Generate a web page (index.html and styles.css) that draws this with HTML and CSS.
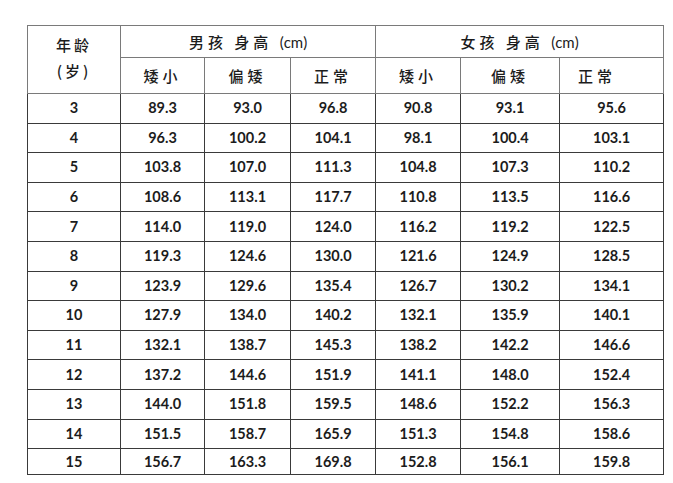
FILE: index.html
```html
<!DOCTYPE html>
<html lang="zh">
<head>
<meta charset="utf-8">
<link rel="stylesheet" href="styles.css">
</head>
<body>
<table class="chart">
  <colgroup>
    <col class="c-age"><col class="c1"><col class="c2"><col class="c3"><col class="c4"><col class="c5"><col class="c6">
  </colgroup>
  <thead>
    <tr class="h1">
      <th rowspan="2" class="zh age">年龄<br>(岁)</th>
      <th colspan="3" class="zh grp">男孩 身高 <span class="lat">(cm)</span></th>
      <th colspan="3" class="zh grp">女孩 身高 <span class="lat">(cm)</span></th>
    </tr>
    <tr class="h2">
      <th class="zh">矮小</th><th class="zh">偏矮</th><th class="zh">正常</th>
      <th class="zh">矮小</th><th class="zh">偏矮</th><th class="zh left">正常</th>
    </tr>
  </thead>
  <tbody>
    <tr><td>3</td><td>89.3</td><td>93.0</td><td>96.8</td><td>90.8</td><td>93.1</td><td>95.6</td></tr>
    <tr><td>4</td><td>96.3</td><td>100.2</td><td>104.1</td><td>98.1</td><td>100.4</td><td>103.1</td></tr>
    <tr><td>5</td><td>103.8</td><td>107.0</td><td>111.3</td><td>104.8</td><td>107.3</td><td>110.2</td></tr>
    <tr><td>6</td><td>108.6</td><td>113.1</td><td>117.7</td><td>110.8</td><td>113.5</td><td>116.6</td></tr>
    <tr><td>7</td><td>114.0</td><td>119.0</td><td>124.0</td><td>116.2</td><td>119.2</td><td>122.5</td></tr>
    <tr><td>8</td><td>119.3</td><td>124.6</td><td>130.0</td><td>121.6</td><td>124.9</td><td>128.5</td></tr>
    <tr><td>9</td><td>123.9</td><td>129.6</td><td>135.4</td><td>126.7</td><td>130.2</td><td>134.1</td></tr>
    <tr><td>10</td><td>127.9</td><td>134.0</td><td>140.2</td><td>132.1</td><td>135.9</td><td>140.1</td></tr>
    <tr><td>11</td><td>132.1</td><td>138.7</td><td>145.3</td><td>138.2</td><td>142.2</td><td>146.6</td></tr>
    <tr><td>12</td><td>137.2</td><td>144.6</td><td>151.9</td><td>141.1</td><td>148.0</td><td>152.4</td></tr>
    <tr><td>13</td><td>144.0</td><td>151.8</td><td>159.5</td><td>148.6</td><td>152.2</td><td>156.3</td></tr>
    <tr><td>14</td><td>151.5</td><td>158.7</td><td>165.9</td><td>151.3</td><td>154.8</td><td>158.6</td></tr>
    <tr class="last"><td>15</td><td>156.7</td><td>163.3</td><td>169.8</td><td>152.8</td><td>156.1</td><td>159.8</td></tr>
  </tbody>
</table>
</body>
</html>
```
FILE: styles.css
```css
html, body {
  margin: 0;
  padding: 0;
  background: #ffffff;
}
body {
  padding: 25px 0 0 27px;
}
.chart {
  border-collapse: collapse;
  table-layout: fixed;
  width: 636px;
  color: #1c1c1c;
  font-family: Lato, "Noto Sans", sans-serif;
  font-weight: 700;
  font-size: 14.5px;
  border: 1px solid #8c8c8c;
}
.c-age { width: 93px; }
.c1 { width: 84px; }
.c2 { width: 86px; }
.c3 { width: 85px; }
.c4 { width: 85px; }
.c5 { width: 99px; }
.c6 { width: 104px; }

.chart th, .chart td {
  border: 1px solid #3a3a3a;
  text-align: center;
  padding: 0;
}
.chart th {
  border-color: #7a7a7a;
}
.zh {
  font-family: "Noto Sans CJK SC", "Noto Sans", sans-serif;
  font-weight: 500;
  font-size: 15px;
  letter-spacing: 4px;
}
.lat {
  font-family: Lato, "Noto Sans", sans-serif;
  font-weight: 400;
  letter-spacing: 0;
}
.age {
  line-height: 26px;
  letter-spacing: 3px;
  padding-bottom: 4px !important;
}
.h1 { height: 32px; }
.h2 { height: 36px; }
.left {
  text-align: left !important;
  padding-left: 18px !important;
}
.chart tbody tr { height: 29.6px; }
.chart tbody tr.last { height: 26px; }
.chart tbody td { line-height: 16px; }
```
